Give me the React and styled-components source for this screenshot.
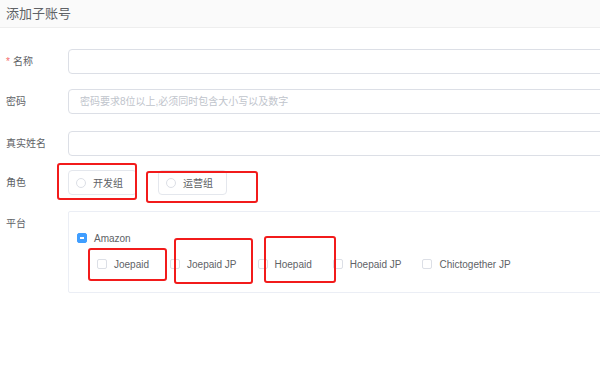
import React from 'react';
import styled, { createGlobalStyle } from 'styled-components';

const GlobalStyle = createGlobalStyle`
    body {
        margin: 0;
        background: #fff;
        font-family: "Liberation Sans", "Noto Sans CJK SC", sans-serif;
    }
`;

const platforms = ['Joepaid', 'Joepaid JP', 'Hoepaid', 'Hoepaid JP', 'Chictogether JP'];

// annotation boxes drawn over the screenshot
const marks = [
    { left: 57, top: 163, width: 80, height: 37 },
    { left: 146, top: 171, width: 112, height: 32 },
    { left: 88, top: 248, width: 79, height: 33 },
    { left: 174, top: 238, width: 79, height: 46 },
    { left: 264, top: 236, width: 72, height: 47 },
];

function App() {
    return (
        <Page>
            <GlobalStyle />
            <Header>添加子账号</Header>
            <Form>
                <Row $space={15}>
                    <Label>
                        <Star>*</Star>名称
                    </Label>
                    <Input />
                </Row>
                <Row $space={17}>
                    <Label>密码</Label>
                    <Input placeholder="密码要求8位以上,必须同时包含大小写以及数字" />
                </Row>
                <Row $space={14}>
                    <Label>真实姓名</Label>
                    <Input />
                </Row>
                <Row $space={16}>
                    <Label>角色</Label>
                    <RadioGroup>
                        <RadioButton>
                            <Circle />
                            开发组
                        </RadioButton>
                        <RadioButton>
                            <Circle />
                            运营组
                        </RadioButton>
                    </RadioGroup>
                </Row>
                <Row>
                    <Label>平台</Label>
                    <PlatformBox>
                        <CheckItem>
                            <Box $checked />
                            Amazon
                        </CheckItem>
                        <SubList>
                            {platforms.map((p) => (
                                <CheckItem key={p}>
                                    <Box />
                                    {p}
                                </CheckItem>
                            ))}
                        </SubList>
                    </PlatformBox>
                </Row>
            </Form>
            {marks.map((m, i) => (
                <Mark key={i} style={m} />
            ))}
        </Page>
    );
}

export default App;

const Page = styled.div`
    position: relative;
    width: 600px;
    height: 378px;
    overflow: hidden;
    background: #fff;
`;

const Header = styled.div`
    height: 27px;
    line-height: 27px;
    padding-left: 6px;
    background: #fafafa;
    border-bottom: 1px solid #eeeeee;
    font-size: 13px;
    color: #606266;
`;

const Form = styled.div`
    width: 650px;
    padding-top: 21px;
`;

const Row = styled.div`
    display: flex;
    align-items: flex-start;
    margin-bottom: ${(p) => p.$space || 0}px;
`;

const Label = styled.div`
    width: 68px;
    flex-shrink: 0;
    padding-left: 6px;
    box-sizing: border-box;
    line-height: 25px;
    font-size: 10px;
    color: #606266;
`;

const Star = styled.span`
    color: #f56c6c;
    margin-right: 3px;
`;

const Input = styled.input`
    flex: 1;
    height: 25px;
    box-sizing: border-box;
    border: 1px solid #dcdfe6;
    border-radius: 4px;
    padding: 0 11px;
    font-family: inherit;
    font-size: 10px;
    color: #606266;
    outline: none;
    &::placeholder {
        color: #c0c4cc;
    }
`;

const RadioGroup = styled.div`
    display: flex;
    gap: 21px;
`;

const RadioButton = styled.div`
    display: flex;
    align-items: center;
    width: 69px;
    height: 25px;
    box-sizing: border-box;
    padding-left: 7px;
    border: 1px solid #e4e7ed;
    border-radius: 4px;
    font-size: 10px;
    color: #606266;
`;

const Circle = styled.span`
    width: 10px;
    height: 10px;
    box-sizing: border-box;
    border: 1px solid #dcdfe6;
    border-radius: 50%;
    margin-right: 7px;
`;

const PlatformBox = styled.div`
    flex: 1;
    height: 82px;
    box-sizing: border-box;
    border: 1px solid #ebeef5;
    border-radius: 2px;
    padding: 19px 0 0 8px;
`;

const SubList = styled.div`
    display: flex;
    padding-left: 20px;
    margin-top: 12px;
`;

const CheckItem = styled.div`
    display: flex;
    align-items: center;
    height: 14px;
    margin-right: 21px;
    font-size: 10px;
    color: #606266;
`;

const Box = styled.span`
    position: relative;
    width: 10px;
    height: 10px;
    box-sizing: border-box;
    border: 1px solid ${(p) => (p.$checked ? '#409eff' : '#dcdfe6')};
    background: ${(p) => (p.$checked ? '#409eff' : '#fff')};
    border-radius: 2px;
    margin-right: 7px;
    &::after {
        content: '';
        display: ${(p) => (p.$checked ? 'block' : 'none')};
        position: absolute;
        left: 2px;
        right: 2px;
        top: 3px;
        height: 2px;
        background: #fff;
    }
`;

const Mark = styled.div`
    position: absolute;
    box-sizing: border-box;
    border: 2px solid #f21b1b;
    border-radius: 3px;
`;
